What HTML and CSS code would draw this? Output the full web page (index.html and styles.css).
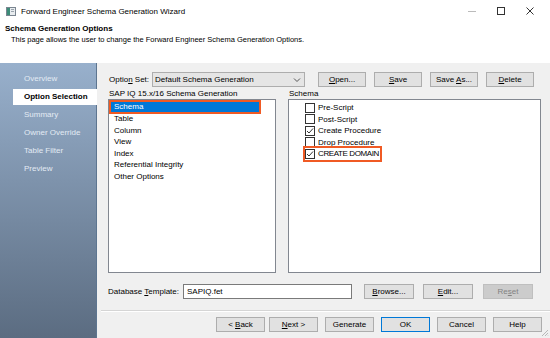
FILE: index.html
```html
<!DOCTYPE html>
<html>
<head>
<meta charset="utf-8">
<link rel="stylesheet" href="styles.css">
</head>
<body>
<div class="window">
  <div class="titlebar">
    <svg class="appicon" width="10" height="9" viewBox="0 0 10 9"><rect x="0.5" y="0.5" width="9" height="8" fill="#e8ecef" stroke="#7a8590"/><rect x="1" y="1" width="3" height="7" fill="#3c8c78"/><rect x="5" y="2" width="3" height="1" fill="#9aa4ad"/><rect x="5" y="4" width="3" height="1" fill="#9aa4ad"/></svg>
    <span class="title">Forward Engineer Schema Generation Wizard</span>
    <div class="controls">
      <svg width="10" height="10" viewBox="0 0 10 10"><line x1="1" y1="5.5" x2="9" y2="5.5" stroke="#bbb" stroke-width="1"/></svg>
      <svg width="10" height="10" viewBox="0 0 10 10"><rect x="1.5" y="1.5" width="7" height="7" fill="none" stroke="#333" stroke-width="1"/></svg>
      <svg width="10" height="10" viewBox="0 0 10 10"><path d="M1.5 1.5 L8.5 8.5 M8.5 1.5 L1.5 8.5" stroke="#333" stroke-width="1"/></svg>
    </div>
  </div>
  <div class="header">
    <div class="h-title">Schema Generation Options</div>
    <div class="h-sub">This page allows the user to change the Forward Engineer Schema Generation Options.</div>
  </div>
  <div class="body">
    <div class="sidebar">
      <div class="nav">Overview</div>
      <div class="nav active">Option Selection</div>
      <div class="nav">Summary</div>
      <div class="nav">Owner Override</div>
      <div class="nav">Table Filter</div>
      <div class="nav">Preview</div>
    </div>
    <div class="main">
      <div class="row1">
        <span class="lbl">Optio<u>n</u> Set:</span>
        <div class="combo"><span>Default Schema Generation</span><svg width="8" height="6" viewBox="0 0 8 6"><path d="M1 1.5 L4 4.5 L7 1.5" fill="none" stroke="#555" stroke-width="1"/></svg></div>
        <div class="btn b-open"><span><u>O</u>pen...</span></div>
        <div class="btn"><span><u>S</u>ave</span></div>
        <div class="btn"><span>Save <u>A</u>s...</span></div>
        <div class="btn"><span><u>D</u>elete</span></div>
      </div>
      <div class="cols">
        <div class="col left">
          <div class="cap">SAP IQ 15.x/16 Schema Generation</div>
          <div class="list">
            <div class="item sel"><span>Schema</span></div>
            <div class="item">Table</div>
            <div class="item">Column</div>
            <div class="item">View</div>
            <div class="item">Index</div>
            <div class="item">Referential Integrity</div>
            <div class="item">Other Options</div>
          </div>
        </div>
        <div class="col right">
          <div class="cap">Schema</div>
          <div class="list rlist">
            <div class="chk"><span class="box"></span>Pre-Script</div>
            <div class="chk"><span class="box"></span>Post-Script</div>
            <div class="chk"><span class="box on"><svg width="8" height="8" viewBox="0 0 8 8"><path d="M1 4 L3 6 L7 1.5" fill="none" stroke="#333" stroke-width="1"/></svg></span>Create Procedure</div>
            <div class="chk"><span class="box"></span>Drop Procedure</div>
            <div class="chk hl"><span class="box on"><svg width="8" height="8" viewBox="0 0 8 8"><path d="M1 4 L3 6 L7 1.5" fill="none" stroke="#333" stroke-width="1"/></svg></span><span class="caps">CREATE DOMAIN</span></div>
          </div>
        </div>
      </div>
      <div class="tplrow">
        <span class="lbl">Database <u>T</u>emplate:</span>
        <div class="input">SAPIQ.fet</div>
        <div class="btn b-browse"><span><u>B</u>rowse...</span></div>
        <div class="btn b-edit"><span><u>E</u>dit...</span></div>
        <div class="btn disabled"><span>Re<u>s</u>et</span></div>
      </div>
      <div class="sep"></div>
      <div class="btnrow">
        <div class="btn"><span>&lt; <u>B</u>ack</span></div>
        <div class="btn b-next"><span><u>N</u>ext &gt;</span></div>
        <div class="btn"><span>Generate</span></div>
        <div class="btn def"><span>OK</span></div>
        <div class="btn"><span>Cancel</span></div>
        <div class="btn"><span>Help</span></div>
      </div>
      <svg class="grip" width="8" height="8" viewBox="0 0 8 8"><path d="M7 1 L1 7 M7 4 L4 7 M7 6.5 L6.5 7" stroke="#aaa" stroke-width="0.8"/></svg>
    </div>
  </div>
</div>
</body>
</html>
```
FILE: styles.css
```css
html, body { margin: 0; padding: 0; }
body { width: 550px; height: 338px; overflow: hidden; font-family: "Liberation Sans", Arial, sans-serif; font-size: 8px; color: #000; }
.window { width: 550px; height: 338px; display: flex; flex-direction: column; background: #f0f0f0; }
.titlebar { height: 22px; background: #fff; display: flex; align-items: center; flex: none; }
.appicon { margin-left: 6px; }
.title { margin-left: 5px; font-size: 8px; color: #000; }
.controls { margin-left: auto; display: flex; gap: 19px; margin-right: 15px; align-items: center; }
.header { height: 41px; background: #fff; flex: none; padding-left: 5px; box-sizing: border-box; padding-top: 1px; }
.h-title { font-weight: bold; font-size: 8px; line-height: 11px; }
.h-sub { padding-left: 6px; line-height: 11px; font-size: 7.5px; }
.body { flex: 1; display: flex; }
.sidebar { width: 97px; flex: none; background: linear-gradient(#98b0cc, #5b6c81); border-right: 1px solid #5d7590; box-sizing: border-box; padding-top: 7px; }
.nav { height: 18px; line-height: 18px; padding-left: 11px; color: #e3ebf4; font-size: 8px; margin-left: 13px; }
.nav.active { background: #fff; color: #000; font-weight: bold; margin-right: -1px; height: 16px; line-height: 16px; margin-top: 1px; margin-bottom: 1px; }
.main { flex: 1; position: relative; padding-top: 9px; box-sizing: border-box; }
.row1 { display: flex; align-items: center; height: 15px; padding-left: 12px; }
.lbl { white-space: nowrap; }
.combo { margin-left: 3px; width: 149px; height: 13px; border: 1px solid #adadad; background: #e5e5e5; display: flex; align-items: center; padding-left: 2px; }
.combo span { flex: 1; }
.combo svg { margin-right: 3px; }
.btn { width: 46px; height: 13px; border: 1px solid #adadad; background: #e1e1e1; display: flex; align-items: center; justify-content: center; flex: none; white-space: nowrap; }
.row1 .btn { margin-left: 8px; }
.row1 .b-open { margin-left: 13px; }
.cols { display: flex; padding-left: 11px; gap: 12px; margin-top: 1px; }
.col { display: flex; flex-direction: column; }
.cap { height: 11px; line-height: 11px; padding-left: 1px; }
.left { width: 168px; }
.right { width: 253px; }
.list { height: 174px; background: #fff; border: 1px solid #828790; box-sizing: border-box; padding: 0 1px; }
.item { height: 11.5px; line-height: 11.5px; padding-left: 4px; }
.item.sel { background: #0078d7; color: #fff; outline: 2px solid #f05a24; outline-offset: -1px; width: 150px; box-sizing: border-box; margin-top: 1px; height: 12px; line-height: 12px; }
.rlist { padding-left: 16px; padding-top: 2px; }
.chk { height: 11.5px; display: flex; align-items: center; width: max-content; padding-right: 1px; }
.box { width: 8px; height: 8px; border: 1px solid #333; background: #fff; margin-right: 3px; display: flex; align-items: center; justify-content: center; flex: none; }
.box svg { display: block; }
.caps { letter-spacing: -0.4px; }
.chk.hl { outline: 2px solid #f05a24; outline-offset: 0px; }
.tplrow { display: flex; align-items: center; margin-top: 11px; padding-left: 11px; height: 15px; }
.input { margin-left: 4px; width: 169px; border: 1px solid #7a7a7a; background: #fff; display: flex; align-items: center; padding-left: 3px; box-sizing: border-box; height: 15px; }
.tplrow .btn { width: 48px; margin-left: 10px; }
.tplrow .b-browse { margin-left: 12px; }
.tplrow .b-edit { margin-left: 9px; }
.btn.disabled { background: #cccccc; border-color: #bfbfbf; color: #838383; }
.sep { height: 0; border-top: 1px solid #d5d5d5; border-bottom: 1px solid #fff; margin-top: 11px; margin-left: 4px; }
.btnrow { display: flex; margin-top: 5px; padding-left: 119px; gap: 7px; }
.btnrow .btn { width: 47px; }
.btnrow .b-next { margin-left: -3px; }
.btn.def { border-color: #0078d7; }
.grip { position: absolute; right: 1px; bottom: 1px; }
u { text-decoration: underline; text-underline-offset: 1px; }
```
